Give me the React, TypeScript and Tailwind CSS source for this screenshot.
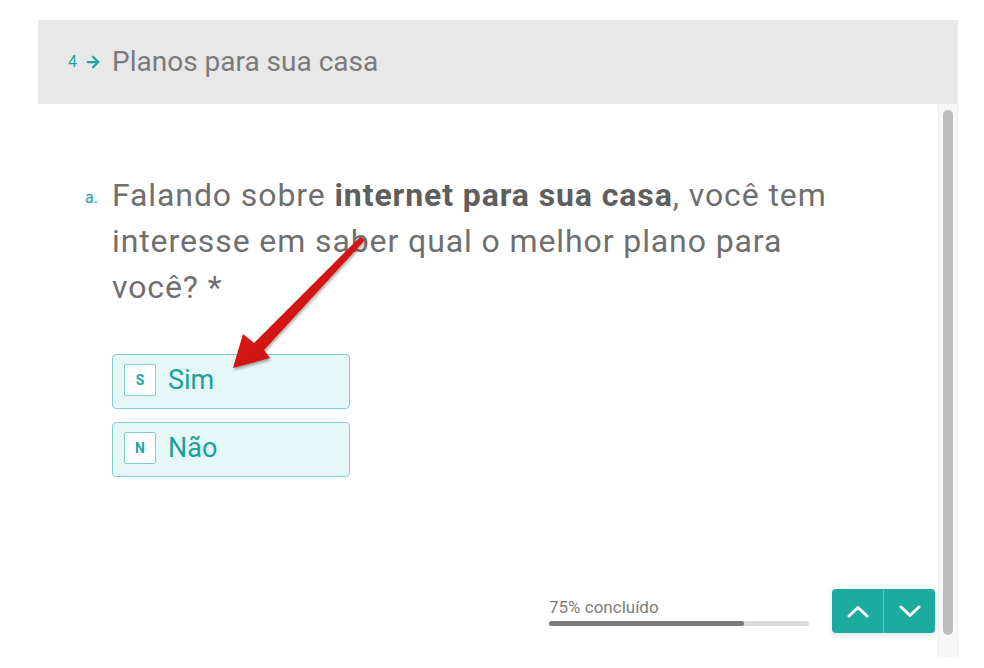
import { ArrowRight } from "lucide-react";

const options = [
  { key: "S", label: "Sim" },
  { key: "N", label: "Não" },
];

const Chevron = ({ up }: { up?: boolean }) => (
  <svg width="22" height="13" viewBox="0 0 22 13" fill="none">
    <polyline
      points={up ? "2,11 11,2.5 20,11" : "2,2 11,10.5 20,2"}
      stroke="white"
      strokeWidth="3"
      strokeLinecap="round"
      strokeLinejoin="round"
    />
  </svg>
);

const RedArrow = () => (
  <svg className="absolute left-0 top-0 pointer-events-none" width="984" height="668" viewBox="0 0 984 668">
    <defs>
      <linearGradient id="arrowFill" x1="0" y1="0" x2="1" y2="1">
        <stop offset="0" stopColor="#e01818" />
        <stop offset="1" stopColor="#c40d0d" />
      </linearGradient>
      <filter id="arrowShadow" x="-20%" y="-20%" width="140%" height="140%">
        <feDropShadow dx="1" dy="2" stdDeviation="1.5" floodColor="#000" floodOpacity="0.35" />
      </filter>
    </defs>
    <polygon
      points="360,237 365,240 264,350 270,358 233,368 243,334 254,343"
      fill="url(#arrowFill)"
      filter="url(#arrowShadow)"
    />
  </svg>
);

export default function App() {
  return (
    <div className="relative w-[984px] h-[668px] bg-white overflow-hidden font-['Roboto',sans-serif]">
      <div className="ml-[38px] mt-[20px] w-[920px]">
        <div className="h-[84px] bg-[#e8e8e8] flex items-center pl-[30px]">
          <span className="text-[16px] text-[#1ba89c] w-[16px]">4</span>
          <ArrowRight className="text-[#1ba89c] mr-[10px]" size={18} strokeWidth={3} />
          <span className="text-[28px] text-[#7b7b7b] leading-none">Planos para sua casa</span>
        </div>

        <div className="flex h-[553px]">
          <div className="flex-1 flex flex-col pt-[68px] pb-[24px] pr-[3px]">
            <div className="flex pl-[47px]">
              <span className="w-[27px] text-[16px] text-[#1ba89c] leading-[46px] pt-[3px]">a.</span>
              <p className="w-[735px] text-[32px] tracking-[0.9px] leading-[46px] text-[#6f6f6f]">
                Falando sobre <strong className="font-bold text-[#5e5e5e]">internet para sua casa</strong>, você tem interesse em saber qual o melhor plano para você? *
              </p>
            </div>

            <div className="flex flex-col gap-[13px] pl-[74px] mt-[44px]">
              {options.map((o) => (
                <div
                  key={o.key}
                  className="w-[238px] h-[55px] flex items-center gap-[12px] pl-[11px] pb-[3px] rounded-[4px] border border-[#7fd2cc] bg-[#e6f7f7]"
                >
                  <span className="w-[32px] h-[32px] flex items-center justify-center bg-white border border-[#7fd2cc] rounded-[2px] text-[14px] font-bold text-[#1ba89c]">
                    {o.key}
                  </span>
                  <span className="text-[27px] text-[#19a398]">{o.label}</span>
                </div>
              ))}
            </div>

            <div className="mt-auto flex items-center justify-end gap-[23px]">
              <div className="w-[260px] flex flex-col gap-[4px]">
                <span className="text-[17px] leading-[20px] text-[#7d7d7d]">75% concluído</span>
                <div className="h-[5px] rounded-full bg-[#dadada]">
                  <div className="h-full rounded-full bg-[#7a7a7a]" style={{ width: "75%" }} />
                </div>
              </div>
              <div className="flex h-[44px] rounded-[4px] bg-[#1bab9f] overflow-hidden shadow-[0_2px_6px_rgba(0,0,0,0.12)]">
                <button className="w-[52px] flex items-center justify-center border-r border-[#5cc6bc]">
                  <Chevron up />
                </button>
                <button className="w-[51px] flex items-center justify-center">
                  <Chevron />
                </button>
              </div>
            </div>
          </div>

          <div className="w-[20px] bg-[#f7f7f7] border-x border-[#ececec] pt-[6px] pb-[22px] flex justify-center">
            <div className="w-[10px] h-full rounded-full bg-[#bdbdbd]" />
          </div>
        </div>
      </div>
      <RedArrow />
    </div>
  );
}
